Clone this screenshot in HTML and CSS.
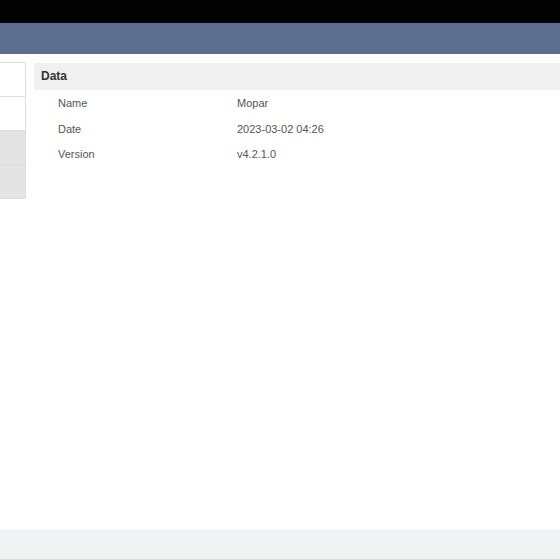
FILE: index.html
```html
<!DOCTYPE html>
<html>
<head>
<meta charset="utf-8">
<link rel="stylesheet" href="styles.css">
</head>
<body>
<div class="page">
  <div class="topbar"></div>
  <div class="header"></div>
  <div class="content">
    <div class="sidebar">
      <div class="side-item white first"></div>
      <div class="side-item white"></div>
      <div class="side-item gray"></div>
      <div class="side-item gray last"></div>
    </div>
    <div class="main">
      <div class="panel-title">Data</div>
      <div class="rows">
        <div class="row"><span class="label">Name</span><span class="value">Mopar</span></div>
        <div class="row"><span class="label">Date</span><span class="value">2023-03-02 04:26</span></div>
        <div class="row"><span class="label">Version</span><span class="value">v4.2.1.0</span></div>
      </div>
    </div>
  </div>
  <div class="footer"></div>
</div>
</body>
</html>
```

FILE: styles.css
```css
html, body {
  margin: 0;
  padding: 0;
  background: #ffffff;
}
body {
  font-family: "Liberation Sans", Arial, sans-serif;
  color: #444;
}
.page {
  width: 560px;
  height: 560px;
  display: flex;
  flex-direction: column;
  overflow: hidden;
}
.topbar {
  height: 23px;
  background: #030303;
  flex: none;
}
.header {
  height: 31px;
  background: #5b6f90;
  flex: none;
}
.content {
  flex: 1;
  display: flex;
  gap: 8px;
  padding-top: 9px;
  min-height: 0;
}
.sidebar {
  width: 26px;
  flex: none;
  display: flex;
  flex-direction: column;
  margin-top: -1px;
}
.side-item {
  height: 33px;
  border: 1px solid #dcdcdc;
  border-left: none;
  border-top: none;
}
.side-item.first {
  border-top: 1px solid #dcdcdc;
  border-top-right-radius: 2px;
}
.side-item.white {
  background: #ffffff;
}
.side-item.gray {
  background: #e4e4e4;
}
.side-item.last {
  border-bottom-right-radius: 2px;
}
.main {
  flex: 1;
  min-width: 0;
}
.panel-title {
  height: 27px;
  line-height: 27px;
  background: #f0f0f0;
  font-size: 12px;
  font-weight: bold;
  color: #333;
  padding-left: 7px;
  border-top-left-radius: 2px;
}
.rows {
  padding-left: 24px;
}
.row {
  display: flex;
  height: 25.5px;
  line-height: 26px;
  font-size: 11px;
  color: #555;
}
.label {
  width: 179px;
  flex: none;
}
.footer {
  height: 29px;
  flex: none;
  background: #f0f2f4;
  border-top: 1px solid #f5f6f8;
  border-bottom: 1px solid #d9d9d2;
}
```
